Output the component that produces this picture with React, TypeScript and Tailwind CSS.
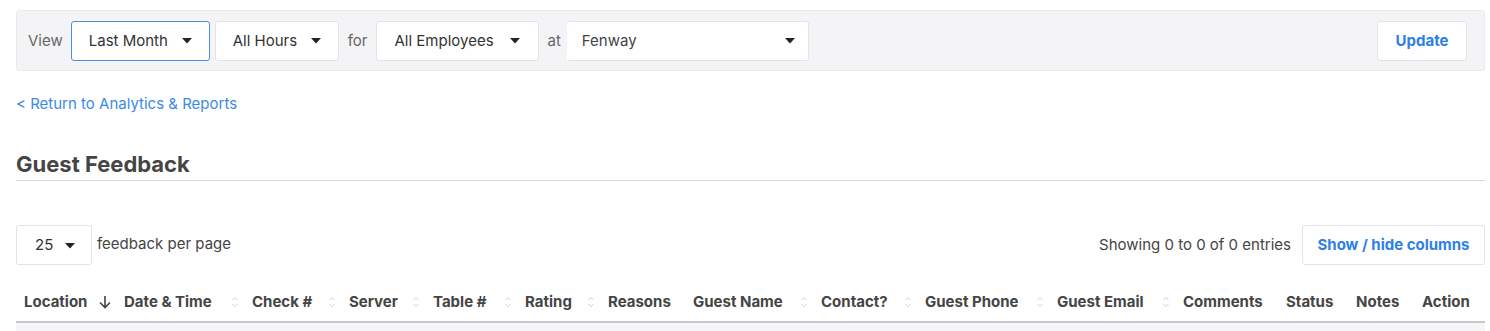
import React from "react";

const Caret = () => (
  <svg width="10" height="6" viewBox="0 0 10 6" className="shrink-0">
    <path d="M0 0 L10 0 L5 5.5 Z" fill="#222" />
  </svg>
);

const SortIcon = () => (
  <svg width="8" height="14" viewBox="0 0 8 14" className="shrink-0">
    <path d="M1.5 5 L4 2.5 L6.5 5" stroke="#d0d0d4" strokeWidth="1" fill="none" />
    <path d="M1.5 9 L4 11.5 L6.5 9" stroke="#d0d0d4" strokeWidth="1" fill="none" />
  </svg>
);

const DownArrow = () => (
  <svg width="12" height="14" viewBox="0 0 12 14" className="shrink-0">
    <path d="M6 1 L6 12.5 M1 7.5 L6 12.5 L11 7.5" stroke="#444" strokeWidth="1.6" fill="none" />
  </svg>
);

type Col = { label: string; w: number; icon?: "sort" | "down" };
const cols: Col[] = [
  { label: "Location", w: 100, icon: "down" },
  { label: "Date & Time", w: 128, icon: "sort" },
  { label: "Check #", w: 97, icon: "sort" },
  { label: "Server", w: 84, icon: "sort" },
  { label: "Table #", w: 92, icon: "sort" },
  { label: "Rating", w: 83, icon: "sort" },
  { label: "Reasons", w: 85 },
  { label: "Guest Name", w: 128, icon: "sort" },
  { label: "Contact?", w: 104, icon: "sort" },
  { label: "Guest Phone", w: 132, icon: "sort" },
  { label: "Guest Email", w: 126, icon: "sort" },
  { label: "Comments", w: 103 },
  { label: "Status", w: 70 },
  { label: "Notes", w: 66 },
  { label: "Action", w: 71 },
];

export default function App() {
  return (
    <div
      className="w-[1490px] h-[331px] bg-white overflow-hidden text-[#555]"
      style={{ fontFamily: "Inter, 'Open Sans', sans-serif" }}
    >
      <div className="pl-4 pr-[5px] pt-[10px]">
        {/* filter bar */}
        <div className="h-[61px] bg-[#f4f4f7] border border-[#ebebef] rounded-[3px] flex items-center pl-[11px] pr-[17px]">
          <span className="text-[15px] text-[#666] mr-[8px] pt-[1px]">View</span>
          <div className="h-[40px] w-[139px] bg-white border border-[#4a90e2] rounded-[3px] flex items-center pl-[17px] pt-[1px] gap-[14px] text-[15px] text-[#333]">
            Last Month <Caret />
          </div>
          <div className="h-[40px] w-[124px] ml-[5px] bg-white border border-[#e2e2e8] rounded-[3px] flex items-center pl-[17px] pt-[1px] gap-[14px] text-[15px] text-[#333]">
            All Hours <Caret />
          </div>
          <span className="text-[15px] text-[#666] ml-[9px] mr-[8px] pt-[1px]">for</span>
          <div className="h-[40px] w-[163px] bg-white border border-[#e2e2e8] rounded-[3px] flex items-center pl-[18px] pt-[1px] gap-[16px] text-[15px] text-[#333]">
            All Employees <Caret />
          </div>
          <span className="text-[15px] text-[#666] ml-[9px] mr-[6px] pt-[1px]">at</span>
          <div className="h-[40px] w-[242px] bg-white border border-[#e2e2e8] border-l-white rounded-[3px] flex items-center justify-between pl-[14px] pr-[13px] text-[15px] text-[#444]">
            <span className="pt-[2px]">Fenway</span> <Caret />
          </div>
          <div className="flex-1" />
          <div className="h-[40px] w-[90px] bg-white border border-[#e2e2e8] rounded-[3px] flex items-center justify-center pt-[1px] text-[15px] font-bold text-[#2e7fe6]">
            Update
          </div>
        </div>

        {/* link */}
        <div className="mt-[23px] text-[15px] text-[#3c8ae8] leading-[20px]">
          &lt; Return to Analytics &amp; Reports
        </div>

        {/* heading */}
        <div className="mt-[35px] border-b border-[#d9d9e0] pb-[1px]">
          <h1 className="text-[22px] font-bold text-[#454545] leading-[30px]">Guest Feedback</h1>
        </div>

        {/* controls */}
        <div className="mt-[44px] flex items-center">
          <div className="h-[40px] w-[76px] bg-white border border-[#e2e2e8] rounded-[3px] flex items-center pl-[18px] pt-[1px] gap-[12px] text-[15px] text-[#333]">
            25 <Caret />
          </div>
          <span className="ml-[5px] text-[15px] text-[#444] -mt-[2px]">feedback per page</span>
          <div className="flex-1" />
          <span className="text-[15px] text-[#444] mr-[11px]">Showing 0 to 0 of 0 entries</span>
          <div className="h-[40px] w-[183px] bg-white border border-[#e2e2e8] rounded-[3px] flex items-center justify-center text-[15px] font-bold text-[#2e7fe6]">
            Show / hide columns
          </div>
        </div>

        {/* table header */}
        <div className="mt-[18px] flex border-b-2 border-[#c9c9cc] h-[40px] items-center">
          {cols.map((c) => (
            <div
              key={c.label}
              style={{ width: c.w }}
              className="shrink-0 flex items-center justify-between pl-[8px] pr-[5px] text-[15px] font-bold text-[#454545] whitespace-nowrap"
            >
              <span>{c.label}</span>
              {c.icon === "sort" && <SortIcon />}
              {c.icon === "down" && <DownArrow />}
            </div>
          ))}
        </div>
        <div className="h-[10px] bg-[#f6f6f8]" />
      </div>
    </div>
  );
}
